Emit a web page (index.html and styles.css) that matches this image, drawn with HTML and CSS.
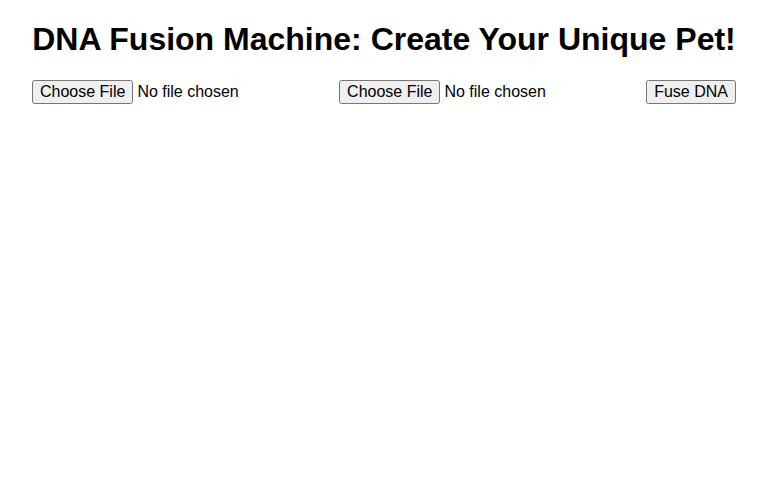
FILE: index.html
```html
<!DOCTYPE html>
<html>
<head>
<meta charset="utf-8">
<link rel="stylesheet" href="styles.css">
</head>
<body>
<div class="container">
  <h1 class="title">DNA Fusion Machine: Create Your Unique Pet!</h1>
  <div class="controls">
    <input type="file" class="file-input">
    <input type="file" class="file-input">
    <button class="fuse-btn">Fuse DNA</button>
  </div>
</div>
</body>
</html>
```
FILE: styles.css
```css
body {
  margin: 0;
  font-family: "Liberation Sans", Arial, sans-serif;
  font-size: 16px;
  background: #fff;
  color: #000;
}
.container {
  padding: 0 32px;
}
.title {
  font-size: 32px;
  font-weight: bold;
  text-align: center;
  margin: 21px 0 22px;
}
.controls {
  display: flex;
  justify-content: space-between;
  align-items: center;
}
.file-input, .fuse-btn {
  font-family: inherit;
  font-size: 16px;
}
```
